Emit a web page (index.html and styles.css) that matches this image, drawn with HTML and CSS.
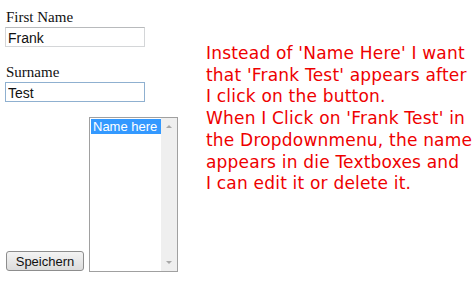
FILE: index.html
```html
<!DOCTYPE html>
<html lang="en">
<head>
  <meta charset="UTF-8">
  <meta name="viewport" content="width=device-width, initial-scale=1.0">
  <title>Namen</title>
  <link rel="stylesheet" href="styles.css">
</head>
<body>
  <div class="page">
    <form class="name-form">
      <label for="first-name">First Name</label>
      <input type="text" id="first-name" value="Frank">

      <label for="surname" class="second">Surname</label>
      <input type="text" id="surname" class="focused" value="Test">

      <div class="actions">
        <button type="button">Speichern</button>
        <div class="listbox">
          <div class="options">
            <div class="option selected">Name here</div>
          </div>
          <div class="scrollbar">
            <span class="arrow up"></span>
            <span class="arrow down"></span>
          </div>
        </div>
      </div>
    </form>

    <p class="note">Instead of 'Name Here' I want<br>that 'Frank Test' appears after<br>I click on the button.<br>When I Click on 'Frank Test' in<br>the Dropdownmenu, the name<br>appears in die Textboxes and<br>I can edit it or delete it.</p>
  </div>
</body>
</html>
```

FILE: styles.css
```css
body {
  margin: 0;
  background: #fff;
  font-family: 'Liberation Serif', serif;
}
.page {
  display: flex;
  padding: 9px 0 0 5px;
}
.name-form {
  display: flex;
  flex-direction: column;
  flex-shrink: 0;
  width: 180px;
}
label {
  font-size: 15px;
  line-height: 17px;
  color: #111;
  padding-left: 1px;
}
label.second {
  margin-top: 17px;
}
input {
  width: 140px;
  height: 20px;
  box-sizing: border-box;
  margin: 1px 0 0;
  padding: 1px 2px 0;
  border: 1px solid #d4d6d8;
  border-top-color: #b8babc;
  font-family: 'Liberation Sans', sans-serif;
  font-size: 14px;
  color: #111;
  outline: none;
}
input.focused {
  border-color: #8fb0d0;
}
.actions {
  display: flex;
  align-items: flex-end;
  margin-top: 15px;
}
button {
  width: 78px;
  height: 20px;
  margin: 0 5px 1px 1px;
  padding: 0;
  border: 1px solid #8d8d8d;
  border-radius: 3px;
  background: linear-gradient(#f4f4f4, #dcdcdc);
  font-family: 'Liberation Sans', sans-serif;
  font-size: 13px;
  color: #111;
}
.listbox {
  display: flex;
  width: 89px;
  height: 155px;
  box-sizing: border-box;
  border: 1px solid #a0a0a0;
  background: #fff;
}
.options {
  flex: 1;
  padding: 1px 0 0 1px;
}
.option {
  font-family: 'Liberation Sans', sans-serif;
  font-size: 13px;
  line-height: 15px;
  padding-left: 2px;
}
.option.selected {
  background: #3399ff;
  color: #fff;
}
.scrollbar {
  width: 16px;
  background: #efefef;
  display: flex;
  flex-direction: column;
  justify-content: space-between;
  align-items: center;
  padding: 7px 0;
}
.arrow {
  width: 0;
  height: 0;
  border-left: 3px solid transparent;
  border-right: 3px solid transparent;
}
.arrow.up {
  border-bottom: 3px solid #a8a8a8;
}
.arrow.down {
  border-top: 3px solid #a8a8a8;
}
.note {
  margin: 34px 0 0 21px;
  font-family: 'DejaVu Sans', sans-serif;
  font-size: 17px;
  line-height: 21.7px;
  letter-spacing: 0.2px;
  white-space: nowrap;
  color: #ee0000;
}
```
